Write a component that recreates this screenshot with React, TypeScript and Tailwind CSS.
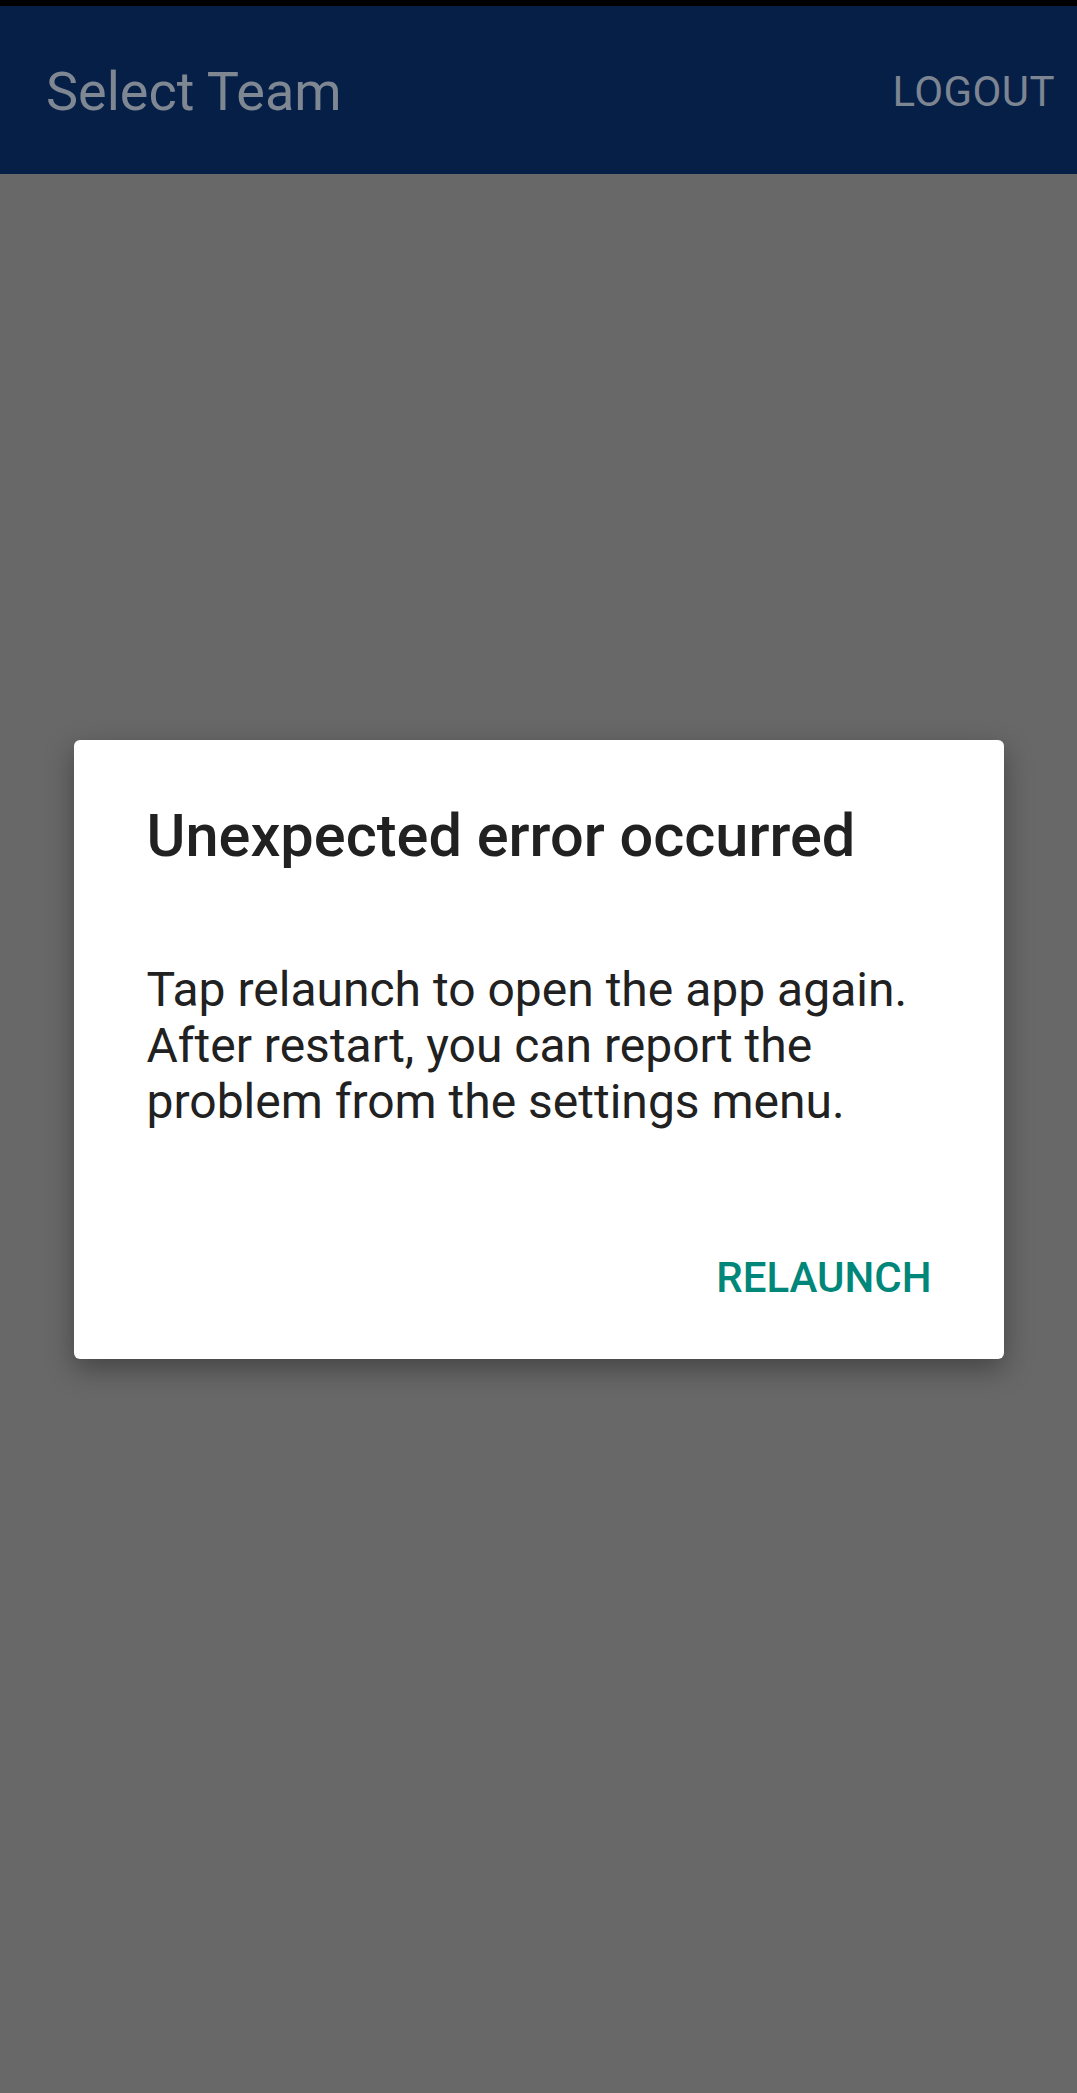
import React from 'react';

// Team picker screen with the crash dialog laid over it
const Header: React.FC = () => (
  <header className="h-[168px] bg-[#061f47] flex items-center justify-between pl-[46px] pr-[22px] pt-[4px]">
    <h1 className="text-[54px] leading-[64px] text-[#7f8793] font-normal">Select Team</h1>
    <button className="text-[42px] leading-[48px] text-[#7c8591] tracking-[0.01em]">LOGOUT</button>
  </header>
);

const CrashDialog: React.FC = () => (
  <div className="absolute inset-0 flex items-center justify-center pt-[6px]">
    <div className="w-[930px] bg-white rounded-[6px] shadow-[0_10px_28px_rgba(0,0,0,0.35)] pt-[61px] pb-[57px] pl-[73px] pr-[72px] flex flex-col">
      <h2 className="text-[59.5px] leading-[70px] font-medium text-[#212121]">Unexpected error occurred</h2>
      <p className="mt-[91px] text-[48px] leading-[56px] text-[#212121]">
        Tap relaunch to open the app again.
        <br />
        After restart, you can report the
        <br />
        problem from the settings menu.
      </p>
      <div className="mt-[124px] flex justify-end">
        <button className="text-[42px] leading-[48px] font-medium text-[#00877a]">RELAUNCH</button>
      </div>
    </div>
  </div>
);

export default function App() {
  return (
    <div className="relative w-full min-h-[2093px] flex flex-col bg-[#686868]" style={{ fontFamily: 'Roboto, "Noto Sans", sans-serif' }}>
      <div className="h-[6px] bg-black" />
      <Header />
      <main className="flex-1 bg-[#686868]" />
      <CrashDialog />
    </div>
  );
}
